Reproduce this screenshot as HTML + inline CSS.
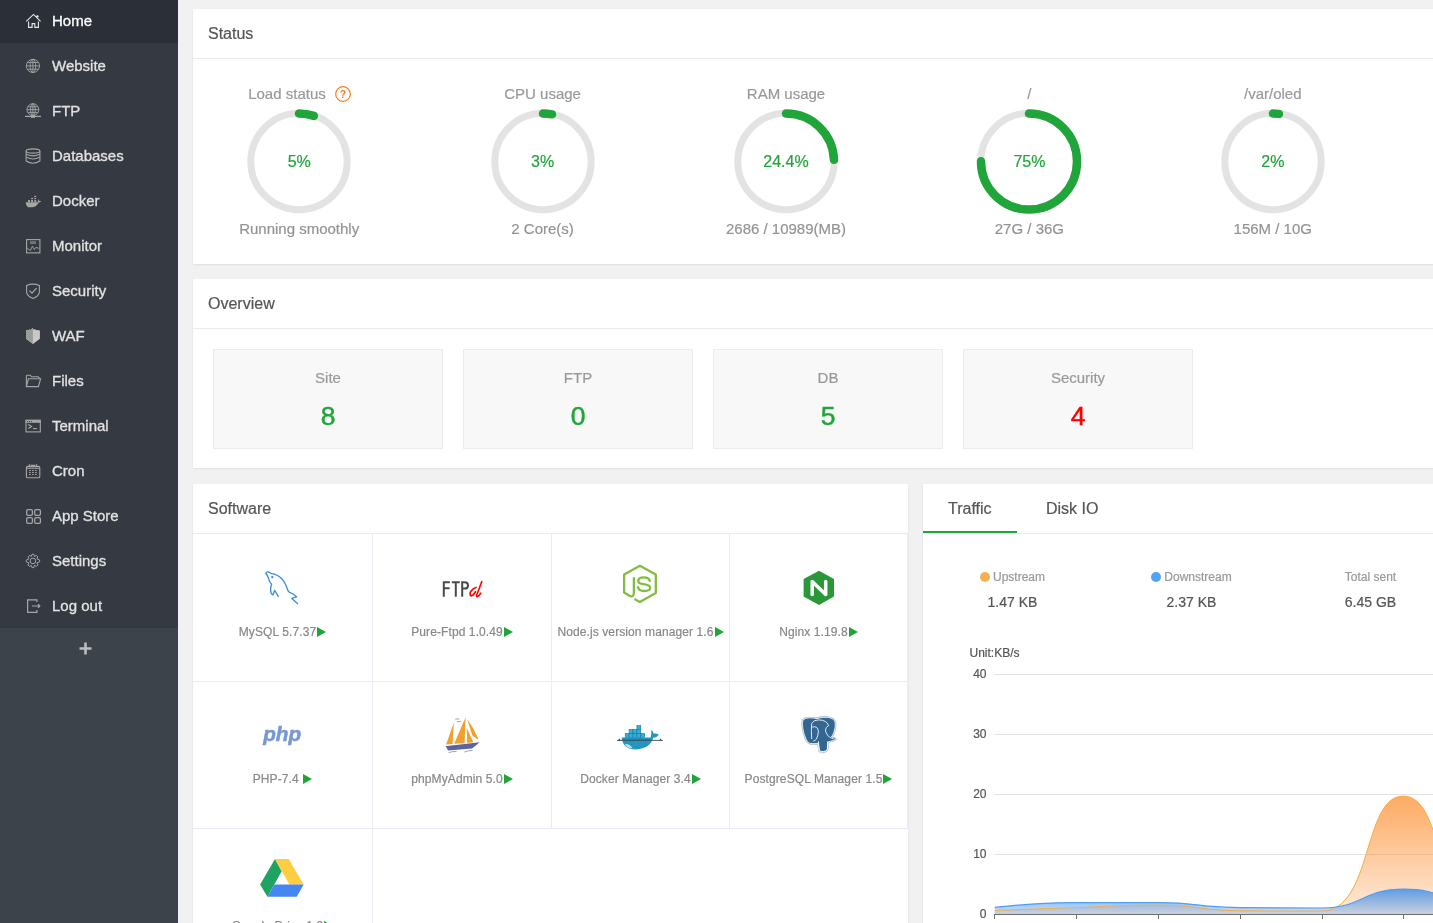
<!DOCTYPE html>
<html><head><meta charset="utf-8">
<style>
*{margin:0;padding:0;box-sizing:border-box}
html,body{width:1433px;height:923px;overflow:hidden}
body{background:#f1f1f1;font-family:"Liberation Sans",sans-serif;position:relative}
.abs{position:absolute}
#side{position:absolute;left:0;top:0;width:178px;height:923px;background:#3c434b}
#menu{position:absolute;left:0;top:0;width:178px;height:628px;background:#353a42}
.mi{position:absolute;left:0;width:178px;height:45px;color:#e2e2e2;font-size:15px;line-height:45px;-webkit-text-stroke:0.3px currentColor}
.mi span{position:absolute;left:52px;top:0}
.mi svg{position:absolute;left:20px;top:10px;width:28px;height:28px;color:#a6a6a6}
.mi.on svg{top:8px;color:#e8e8e8}
.mi.on{background:#2b2f37;color:#fff;height:43px;line-height:41px}
#plus{position:absolute;left:78px;top:641px;width:15px;height:15px}
.card{position:absolute;background:#fff;box-shadow:0 1px 2px rgba(0,0,0,0.08);-webkit-text-stroke:0.2px currentColor}
.ch{position:absolute;left:0;top:0;right:0;height:50px;border-bottom:1px solid #eaeaea}
.ct{position:absolute;left:15px;top:16px;font-size:16px;color:#555;line-height:18px}
.g{position:absolute;width:200px;height:250px;text-align:center;font-size:15px}
.gt{position:absolute;left:0;width:200px;top:76px;line-height:18px;color:#999}
.gb{position:absolute;left:0;width:200px;top:211px;line-height:18px;color:#939393}
.gv{position:absolute;left:0;width:200px;top:144px;line-height:18px;color:#20a53a;font-size:16px}

.ob{position:absolute;top:70px;width:230px;height:100px;background:#f8f8f8;border:1px solid #ececec;text-align:center}
.ol{position:absolute;left:0;right:0;top:19px;font-size:15px;color:#999;line-height:18px}
.on2{position:absolute;left:0;right:0;top:51px;font-size:26.5px;-webkit-text-stroke:0.5px currentColor;color:#20a53a;line-height:30px}
.sc{position:absolute;border-right:1px solid #ebebf8;border-bottom:1px solid #ebebf8}
.sn{position:absolute;left:0;right:0;top:91px;text-align:center;font-size:12px;color:#888;line-height:14px;white-space:nowrap;letter-spacing:0.1px}
.sn i{display:inline-block;width:0;height:0;border-top:5px solid transparent;border-bottom:5px solid transparent;border-left:9px solid #20a53a;vertical-align:-1px;margin-left:1px}
.si{position:absolute;left:0;right:0;top:30px;height:45px}
.si svg{position:absolute;left:50%;transform:translateX(-50%)}
.tab{position:absolute;top:16px;font-size:16px;line-height:18px;color:#555}
.st{position:absolute;top:86px;width:179px;text-align:center;font-size:12px;line-height:14px;color:#999}
.dot{display:inline-block;width:10px;height:10px;border-radius:50%;margin-right:3px;vertical-align:-0.5px}
.sv{position:absolute;top:110px;width:179px;text-align:center;font-size:14px;line-height:16px;color:#555}
.yl{position:absolute;left:0;width:63.5px;text-align:right;font-size:12px;line-height:14px;color:#555}
</style></head><body><div id="wrap" style="position:absolute;left:0;top:0;width:1433px;height:923px;overflow:hidden;will-change:transform">
<div id="side">
  <div id="menu">
    <div class="mi on" style="top:0"><svg viewBox="0 0 28 28" stroke="currentColor" stroke-width="1.1"><path d="M6.2 13.3 L13.5 6.4 L20.6 13.3" fill="none"/><path d="M8.6 13.6 V19.4 H12.1 V15.6 H14.8 V19.4 H18.4 V13.6" fill="none"/><circle cx="17.4" cy="8.4" r="1.2" fill="currentColor" stroke="none"/></svg><span>Home</span></div>
    <div class="mi" style="top:43px"><svg viewBox="0 0 28 28" stroke="currentColor" stroke-width="0.9"><circle cx="12.9" cy="12.9" r="6.6" fill="none"/><ellipse cx="12.9" cy="12.9" rx="2.8" ry="6.6" fill="none"/><path d="M12.9 6.3V19.5M6.3 12.9H19.5M7.4 9.6H18.4M7.4 16.2H18.4" fill="none"/></svg><span>Website</span></div>
    <div class="mi" style="top:88px"><svg viewBox="0 0 28 28" stroke="currentColor" stroke-width="0.9"><circle cx="12.9" cy="11.6" r="5.9" fill="none"/><ellipse cx="12.9" cy="11.6" rx="2.4" ry="5.9" fill="none"/><path d="M12.9 5.7V17.5M7 11.6H18.8M8 8.8H17.8M8 14.4H17.8" fill="none"/><path d="M5 18.4H21" fill="none" stroke-width="1.3"/><rect x="11" y="17.3" width="4" height="2.6" fill="currentColor" stroke="none"/></svg><span>FTP</span></div>
    <div class="mi" style="top:133px"><svg viewBox="0 0 28 28" stroke="currentColor" stroke-width="1.1"><ellipse cx="13" cy="8" rx="6.9" ry="2.1" fill="none"/><path d="M6.1 8V18 Q13 22.5 19.9 18 V8" fill="none"/><path d="M6.6 11.2 Q13 14.6 19.4 11.2M6.6 14.3 Q13 17.7 19.4 14.3" fill="none"/></svg><span>Databases</span></div>
    <div class="mi" style="top:178px"><svg viewBox="0 0 28 28" stroke="currentColor" stroke-width="1.1"><g fill="currentColor" stroke="none"><rect x="14.3" y="7.8" width="1.9" height="1.3"/><rect x="11.1" y="9.9" width="1.9" height="1.3"/><rect x="14.3" y="9.9" width="1.9" height="1.3"/><rect x="8" y="12" width="1.9" height="2"/><rect x="11.1" y="12" width="1.9" height="2"/><rect x="14.3" y="12" width="1.9" height="2"/><path d="M5.8 14.2 H17.6 C18 13 18.2 11.8 18.6 11 C19.1 12 19.2 12.6 19.3 13 C20 12.8 20.6 12.9 21.1 13.2 C20.6 14.1 19.4 14.4 18.6 14.4 C17.2 17.4 15 19.2 11.8 19.2 H8.3 C6.8 18.4 5.8 16.6 5.8 14.2Z"/></g></svg><span>Docker</span></div>
    <div class="mi" style="top:223px"><svg viewBox="0 0 28 28" stroke="currentColor" stroke-width="1.1"><rect x="6.6" y="6.6" width="13.3" height="13.3" fill="none"/><rect x="10" y="8.2" width="6" height="2.8" fill="currentColor" stroke="none" opacity="0.55"/><path d="M7.2 15 L10.4 17.6 L12.4 13.2 L14.4 16.6 L15.8 14.4 L18.9 15.3" fill="none" stroke-width="0.9"/></svg><span>Monitor</span></div>
    <div class="mi" style="top:268px"><svg viewBox="0 0 28 28" stroke="currentColor" stroke-width="1.1"><path d="M6.6 7.4 Q13 4.8 19.4 7.4 V14.3 Q18.6 18 13 20.6 Q7.4 18 6.6 14.3Z" fill="none"/><path d="M9.4 12.6 L12 15.1 L16.6 10.1" fill="none" stroke-width="1.3"/></svg><span>Security</span></div>
    <div class="mi" style="top:313px"><svg viewBox="0 0 28 28" stroke="currentColor" stroke-width="1.1"><path d="M6 7.4 L7.6 6.8 L8.4 7.5 L9.8 6.2 L10.8 7 L12.5 5.1 L13.6 6.4 L15.3 6.3 L16.2 7.3 L17.8 6.9 L19.9 7.5 V15.8 L13 20.9 L6 15.8Z" fill="#c9c9c9" stroke="none"/><path d="M6 7.4 L7.6 6.8 L8.4 7.5 L9.8 6.2 L10.8 7 L12.5 5.1 L12.9 5.6 V20.9 L6 15.8Z" fill="#9c9c9c" stroke="none"/></svg><span>WAF</span></div>
    <div class="mi" style="top:358px"><svg viewBox="0 0 28 28" stroke="currentColor" stroke-width="1.1"><path d="M6.4 18.6 V8.2 Q6.4 7.3 7.3 7.3 H10.3 L11.6 8.8 H18.2 L19.6 10.3" fill="none"/><path d="M6.4 18.6 L8.4 10.8 H20.6 L18.4 18.6Z" fill="none"/></svg><span>Files</span></div>
    <div class="mi" style="top:403px"><svg viewBox="0 0 28 28" stroke="currentColor" stroke-width="1.1"><rect x="6" y="7.3" width="14.3" height="11.6" fill="none"/><rect x="5.6" y="6.8" width="15.1" height="3" fill="currentColor" stroke="none"/><g fill="#353a42" stroke="none"><circle cx="7.5" cy="8.5" r="0.55"/><circle cx="9.5" cy="8.5" r="0.55"/><circle cx="11.5" cy="8.5" r="0.55"/></g><path d="M8.3 11.4 L11.6 13.5 L8.3 15.6" fill="none" stroke-width="1.2"/><path d="M12.9 15.6 H16.9" fill="none" stroke-width="1.1"/></svg><span>Terminal</span></div>
    <div class="mi" style="top:448px"><svg viewBox="0 0 28 28" stroke="currentColor" stroke-width="1.1"><rect x="6.4" y="8.4" width="13.4" height="11.4" rx="1.4" fill="none"/><path d="M6.6 10.2 H19.6" fill="none"/><path d="M9.4 6.2 V8.6 M16.5 6.2 V8.6 M10.8 7.4 H15.1" fill="none" stroke-width="1.2"/><g fill="currentColor" stroke="none"><rect x="9" y="12" width="1.8" height="0.9"/><rect x="12" y="12" width="1.8" height="0.9"/><rect x="15" y="12" width="1.8" height="0.9"/><rect x="9" y="14" width="1.8" height="0.9"/><rect x="12" y="14" width="1.8" height="0.9"/><rect x="15" y="14" width="1.8" height="0.9"/><rect x="9" y="16.1" width="1.8" height="0.9"/><rect x="12" y="16.1" width="1.8" height="0.9"/><rect x="15" y="16.1" width="1.8" height="0.9"/></g></svg><span>Cron</span></div>
    <div class="mi" style="top:493px"><svg viewBox="0 0 28 28" stroke="currentColor" stroke-width="1.1"><rect x="6.7" y="6.7" width="5.7" height="5.6" rx="1.3" fill="none" stroke-width="1.3"/><rect x="14.7" y="6.7" width="5.7" height="5.6" rx="1.3" fill="none" stroke-width="1.3"/><rect x="6.7" y="14.7" width="5.7" height="5.6" rx="1.3" fill="none" stroke-width="1.3"/><rect x="14.7" y="14.7" width="5.7" height="5.6" rx="1.3" fill="none" stroke-width="1.3"/></svg><span>App Store</span></div>
    <div class="mi" style="top:538px"><svg viewBox="0 0 28 28" stroke="currentColor" stroke-width="1.1"><path d="M12 6.3 H13.8 L14.4 8.4 L16.3 7.4 L17.8 8.9 L16.9 10.8 L19.6 12 V13.8 L16.9 14.9 L17.9 16.9 L16.4 18.4 L14.4 17.4 L13.8 19.6 H12 L11.3 17.4 L9.4 18.4 L7.9 16.9 L8.9 14.9 L6.3 13.8 V12 L8.9 10.8 L8 8.9 L9.5 7.4 L11.3 8.4Z" fill="none" stroke-width="1"/><circle cx="12.9" cy="12.9" r="2.8" fill="none" stroke-width="1"/></svg><span>Settings</span></div>
    <div class="mi" style="top:583px"><svg viewBox="0 0 28 28" stroke="currentColor" stroke-width="1.1"><path d="M16.9 9 V6.8 H7.6 V19.3 H16.9 V17" fill="none" stroke-width="1.2"/><path d="M12 13 H19.6 M18 11.2 L19.8 13 L18 14.8" fill="none" stroke-width="1.2"/></svg><span>Log out</span></div>
  </div>
  <svg id="plus" viewBox="0 0 15 15" width="15" height="15"><path d="M7.5 1.5V13.5M1.5 7.5H13.5" stroke="#bdbdbd" stroke-width="2.6"/></svg>
</div>

<!-- Status -->
<div class="card" style="left:193px;top:9px;width:1260px;height:255px">
  <div class="ch" style="height:50px"><div class="ct">Status</div></div>
<div class="g" style="left:6.2px;top:0">
  <div class="gt" style="text-align:left;left:49px">Load status</div><svg class="q" width="18" height="18" viewBox="0 0 18 18" style="position:absolute;left:134.4px;top:76px"><circle cx="9" cy="9" r="7.3" fill="none" stroke="#f3802a" stroke-width="1.2"/><text x="9" y="12.8" text-anchor="middle" font-size="10.5" font-weight="bold" fill="#f3802a" font-family="Liberation Sans">?</text></svg>
  <svg class="gs" width="200" height="120" viewBox="0 0 200 120" style="position:absolute;left:0;top:92px"><circle cx="100" cy="60.5" r="48.2" fill="none" stroke="#e3e3e3" stroke-width="7"/><circle cx="100" cy="60.5" r="48" fill="none" stroke="#20a53a" stroke-width="8.5" stroke-linecap="round" stroke-dasharray="15.08 400" transform="rotate(-90 100 60.5)"/></svg>
  <div class="gv">5%</div>
  <div class="gb">Running smoothly</div>
</div>
<div class="g" style="left:249.6px;top:0">
  <div class="gt">CPU usage</div>
  <svg class="gs" width="200" height="120" viewBox="0 0 200 120" style="position:absolute;left:0;top:92px"><circle cx="100" cy="60.5" r="48.2" fill="none" stroke="#e3e3e3" stroke-width="7"/><circle cx="100" cy="60.5" r="48" fill="none" stroke="#20a53a" stroke-width="8.5" stroke-linecap="round" stroke-dasharray="9.05 400" transform="rotate(-90 100 60.5)"/></svg>
  <div class="gv">3%</div>
  <div class="gb">2 Core(s)</div>
</div>
<div class="g" style="left:493.0px;top:0">
  <div class="gt">RAM usage</div>
  <svg class="gs" width="200" height="120" viewBox="0 0 200 120" style="position:absolute;left:0;top:92px"><circle cx="100" cy="60.5" r="48.2" fill="none" stroke="#e3e3e3" stroke-width="7"/><circle cx="100" cy="60.5" r="48" fill="none" stroke="#20a53a" stroke-width="8.5" stroke-linecap="round" stroke-dasharray="73.59 400" transform="rotate(-90 100 60.5)"/></svg>
  <div class="gv">24.4%</div>
  <div class="gb">2686 / 10989(MB)</div>
</div>
<div class="g" style="left:736.4px;top:0">
  <div class="gt">/</div>
  <svg class="gs" width="200" height="120" viewBox="0 0 200 120" style="position:absolute;left:0;top:92px"><circle cx="100" cy="60.5" r="48.2" fill="none" stroke="#e3e3e3" stroke-width="7"/><circle cx="100" cy="60.5" r="48" fill="none" stroke="#20a53a" stroke-width="8.5" stroke-linecap="round" stroke-dasharray="226.19 400" transform="rotate(-90 100 60.5)"/></svg>
  <div class="gv">75%</div>
  <div class="gb">27G / 36G</div>
</div>
<div class="g" style="left:979.8px;top:0">
  <div class="gt">/var/oled</div>
  <svg class="gs" width="200" height="120" viewBox="0 0 200 120" style="position:absolute;left:0;top:92px"><circle cx="100" cy="60.5" r="48.2" fill="none" stroke="#e3e3e3" stroke-width="7"/><circle cx="100" cy="60.5" r="48" fill="none" stroke="#20a53a" stroke-width="8.5" stroke-linecap="round" stroke-dasharray="6.03 400" transform="rotate(-90 100 60.5)"/></svg>
  <div class="gv">2%</div>
  <div class="gb">156M / 10G</div>
</div>
</div>

<!-- Overview -->
<div class="card" style="left:193px;top:279px;width:1260px;height:189px">
  <div class="ch"><div class="ct">Overview</div></div>
  <div class="ob" style="left:20px"><div class="ol">Site</div><div class="on2">8</div></div>
  <div class="ob" style="left:270px"><div class="ol">FTP</div><div class="on2">0</div></div>
  <div class="ob" style="left:520px"><div class="ol">DB</div><div class="on2">5</div></div>
  <div class="ob" style="left:770px"><div class="ol">Security</div><div class="on2" style="color:#f00">4</div></div>
</div>

<!-- Software -->
<div class="card" style="left:193px;top:484px;width:715px;height:460px;overflow:hidden">
  <div class="ch"><div class="ct">Software</div></div>
<div class="sc" style="left:0px;top:50px;width:180px;height:148px"></div>
<div class="sn" style="left:0px;width:179px;top:141px">MySQL 5.7.37<i></i></div>
<div class="sc" style="left:180px;top:50px;width:179px;height:148px"></div>
<div class="sn" style="left:180px;width:178px;top:141px">Pure-Ftpd 1.0.49<i></i></div>
<div class="sc" style="left:359px;top:50px;width:178px;height:148px"></div>
<div class="sn" style="left:359px;width:177px;top:141px">Node.js version manager 1.6<i></i></div>
<div class="sc" style="left:537px;top:50px;width:178px;height:148px"></div>
<div class="sn" style="left:537px;width:177px;top:141px">Nginx 1.19.8<i></i></div>
<div class="sc" style="left:0px;top:198px;width:180px;height:147px"></div>
<div class="sn" style="left:0px;width:179px;top:288px">PHP-7.4 <i></i></div>
<div class="sc" style="left:180px;top:198px;width:179px;height:147px"></div>
<div class="sn" style="left:180px;width:178px;top:288px">phpMyAdmin 5.0<i></i></div>
<div class="sc" style="left:359px;top:198px;width:178px;height:147px"></div>
<div class="sn" style="left:359px;width:177px;top:288px">Docker Manager 3.4<i></i></div>
<div class="sc" style="left:537px;top:198px;width:178px;height:147px"></div>
<div class="sn" style="left:537px;width:177px;top:288px">PostgreSQL Manager 1.5<i></i></div>
<div class="sc" style="left:0px;top:345px;width:180px;height:147px"></div>
<div class="sn" style="left:0px;width:179px;top:435px">Google Drive 1.0<i></i></div>
<svg class="abs" style="left:0;top:0" width="715" height="460" viewBox="193 484 715 460">
<!-- mysql -->
<g transform="translate(258 562)" fill="none" stroke="#3d8fd8" stroke-width="1.35" stroke-linejoin="round" stroke-linecap="round">
<path d="M20.3 34.3 L16.6 28.3 L15.1 32.8 Q12.6 31.8 12.6 28 Q12.5 24.6 13.6 22.4 Q11.2 19.4 10.2 15.6 Q9 12.6 7.9 11.3 Q8.2 9.6 10.2 9.9 Q12 10.4 13.6 11.7 Q19.4 12.4 23.8 16.8 Q27 20.2 28.6 25 Q29.8 29.2 31.2 30.2 Q35 31.6 38.6 34.8 L33.8 36.4 L39.5 41.6"/>
<circle cx="14.3" cy="15.1" r="0.5" fill="#3d8fd8"/>
</g>
<!-- ftpd -->
<g transform="translate(436 568)" fill="none" stroke="#4a4a4a" stroke-width="2">
<path d="M7.8 28.7 V14.2 H13.9 M7.8 20.3 H13.6"/>
<path d="M15.8 14.2 H23.8 M19.8 14.2 V28.7"/>
<path d="M26.2 28.7 V14.2 H28.6 Q32 14.2 32 17.4 Q32 20.6 28.6 20.6 H26.2"/>
<path d="M40 19.4 Q36.6 20.4 34.4 24 Q33.4 27.4 35.2 28 Q37.2 27.6 39.6 23.8 M45.8 13.6 L40.8 26.8 Q40.2 29 41.6 28.6 Q43.2 27.6 44.8 25.2" stroke="#f00" stroke-width="1.6" stroke-linecap="round" stroke-linejoin="round"/>
</g>
<!-- node -->
<g transform="translate(616 560)" fill="none" stroke="#80bd41" stroke-width="2.3" stroke-linejoin="round">
<path d="M18.4 39 L23.9 42 L39.8 33 V14.6 L23.9 5.7 L8.1 14.6 V32.6 L13.5 35.8 Q17.9 37.6 17.9 32.6 V17.2"/>
<path d="M33.8 20.8 Q32.6 17.4 28 17.4 Q22.2 17.4 22.2 21 Q22.2 23.6 27.6 24.2 Q34.2 25 34.2 27.8 Q34.2 31 28 31 Q23 31 22 27.2" stroke-linecap="round"/>
</g>
<!-- nginx -->
<g transform="translate(794 564)">
<path d="M25 6.8 L40 15.1 V32.5 L25 41.1 L9.6 32.5 V15.1Z" fill="#2a9739"/>
<path d="M18.2 30.6 V17.6 L31.7 30.4 V17.6" fill="none" stroke="#fff" stroke-width="3.5" stroke-linecap="round" stroke-linejoin="round"/>
</g>
<!-- php -->
<text x="263.2" y="741.2" font-family="Liberation Sans" font-weight="bold" font-style="italic" font-size="21" fill="#7797d1" stroke="#7797d1" stroke-width="0.5" textLength="38" lengthAdjust="spacingAndGlyphs" transform="translate(0 741.2) scale(1 0.95) translate(0 -741.2)">php</text>
<!-- phpmyadmin -->
<g transform="translate(436 712)">
<path d="M10.1 32.5 L17.9 10.4 L16.6 32Z M18.2 31.7 L29.6 5.2 L28.6 31.2Z M30.7 16.1 L31.2 30.9 L37.4 30.2Z M31.2 7.3 Q38 16 42.6 27.6 Q39 26 36.2 23.2Z" fill="#f0a12c"/>
<path d="M9.6 34.2 L43.6 30.2 Q40 33.4 36 36.4 L12.2 38.6Z" fill="#5d62a0"/>
<path d="M12.6 40.6 Q16 39.4 20.6 39.4 M28.4 40 Q32 38.6 36.6 38.4 M19.2 7 H23.4 M21 9.6 H25" stroke="#5d62a0" stroke-width="0.6" fill="none"/>
</g>
<!-- docker -->
<g transform="translate(612 712)">
<path d="M9.7 25.4 H38.6 Q39.6 22 39.2 17.8 Q41 18.8 41.6 21.6 Q44.6 21.2 46.8 22.7 Q45 25.6 41.2 25.8 Q38.6 36.4 24 37.4 Q11 37.6 9.7 25.4Z" fill="#2496c2"/>
<path d="M13 32 Q18 31.6 20.6 36.6 Q14 36 13 32Z" fill="#bfe0e8"/>
<g fill="#30b2dc" stroke="#1d6f8a" stroke-width="0.55">
<rect x="13.2" y="21.4" width="3.9" height="3.9"/><rect x="17.1" y="21.4" width="3.9" height="3.9"/><rect x="21" y="21.4" width="3.9" height="3.9"/><rect x="24.9" y="21.4" width="3.9" height="3.9"/><rect x="28.8" y="21.4" width="3.9" height="3.9"/>
<rect x="17.1" y="17.5" width="3.9" height="3.9"/><rect x="21" y="17.5" width="3.9" height="3.9"/><rect x="24.9" y="17.5" width="3.9" height="3.9"/>
<rect x="24.9" y="13.6" width="3.9" height="3.9"/>
</g>
<path d="M5 28.4 H50.8" stroke="#3b4a52" stroke-width="0.9"/>
<path d="M6 28.4 L7.4 26.4 L8.8 28.4 M47.2 28.4 L48.6 26.4 L50 28.4" fill="#3b4a52"/>
<path d="M9.7 28 Q13 26 15 28 Q19 26 23.6 28 Q28 26 31.6 28 Q35 26 39 28" fill="none" stroke="#1d6f8a" stroke-width="0.6"/>
</g>
<!-- postgres -->
<g transform="translate(794 710)">
<path id="pgo" d="M8.8 10.4 Q11 7.6 15.6 7.8 Q19.6 7.8 22.9 8.6 Q28 6.8 33.3 7.3 Q40 8.2 41.1 12 Q41.8 17 40 21.8 Q39 25 37.4 27 Q41 27.6 41.6 29.1 Q40 31 36.4 31.2 L33.8 32.2 Q33.8 37 33.3 39.5 Q31.6 42.4 29.1 42.1 Q26.4 42.2 25.5 41.1 Q24.6 37 24.4 33.3 Q19.6 34 15.6 33.3 Q13 31.6 12 29.1 Q9.4 23 8.8 18.2 Q8.2 13 8.8 10.4Z" fill="#336791" stroke="#a5bbd0" stroke-width="2.2"/>
<path d="M8.8 10.4 Q11 7.6 15.6 7.8 Q19.6 7.8 22.9 8.6 Q28 6.8 33.3 7.3 Q40 8.2 41.1 12 Q41.8 17 40 21.8 Q39 25 37.4 27 Q41 27.6 41.6 29.1 Q40 31 36.4 31.2 L33.8 32.2 Q33.8 37 33.3 39.5 Q31.6 42.4 29.1 42.1 Q26.4 42.2 25.5 41.1 Q24.6 37 24.4 33.3 Q19.6 34 15.6 33.3 Q13 31.6 12 29.1 Q9.4 23 8.8 18.2 Q8.2 13 8.8 10.4Z" fill="#336791" stroke="#fff" stroke-width="0.8"/>
<path d="M17.7 29.1 Q17 20 17.7 13.5 Q19.6 9.8 24.4 9.9 Q29 10 31.2 11.4 Q33.8 13 34.6 15.6 Q33 16.4 32.2 17.7 Q31.2 20 31.7 21.8 Q33.4 25.6 35.4 27 Q37.6 28.4 39.5 29.1 M18.2 17.2 Q20.4 16.2 22.4 17.2 Q24.6 19 24.4 21.8 Q24 26 22.4 29.1 Q21 30.8 19.2 31.2 M24.4 31.2 Q24.8 37 25.5 40.6 Q27 41.8 29.1 41.6 Q32.4 41.2 33.3 39.5 Q33.6 35 33.8 31.2" fill="none" stroke="#fff" stroke-width="0.85"/>
</g>
<!-- gdrive -->
<g transform="translate(256 852)">
<path d="M19 7 L25.7 19.3 L11.4 44.8 L4.1 32.5Z" fill="#1ea362"/>
<path d="M19 7 H32.8 L47.7 32.5 H33.4Z" fill="#ffcd40"/>
<path d="M18.4 32.5 H47.7 L40.7 44.8 H11.4Z" fill="#4586f3"/>
</g>
</svg>
</div>

<!-- Traffic -->
<div class="card" style="left:923px;top:484px;width:530px;height:460px">
  <div class="ch"></div>
  <div class="tab" style="left:25px">Traffic</div>
  <div class="tab" style="left:123px">Disk IO</div>
  <div class="abs" style="left:0;top:47px;width:94px;height:2px;background:#20a53a"></div>
  <div class="st" style="left:0"><span class="dot" style="background:#f6b04f"></span>Upstream</div>
  <div class="sv" style="left:0">1.47 KB</div>
  <div class="st" style="left:179px"><span class="dot" style="background:#52a2f5"></span>Downstream</div>
  <div class="sv" style="left:179px">2.37 KB</div>
  <div class="st" style="left:358px">Total sent</div>
  <div class="sv" style="left:358px">6.45 GB</div>
  <div class="st" style="left:537px">Total received</div>
  <div class="sv" style="left:537px">0 B</div>
  <div class="abs" style="left:46.5px;top:162px;font-size:12px;line-height:14px;color:#555">Unit:KB/s</div>
<div class="yl" style="top:182.8px">40</div><div class="yl" style="top:242.8px">30</div><div class="yl" style="top:302.8px">20</div><div class="yl" style="top:362.8px">10</div><div class="yl" style="top:422.8px">0</div><svg class="abs" style="left:0;top:0" width="530" height="460" viewBox="923 484 530 460">
<defs>
<linearGradient id="go" x1="0" y1="796" x2="0" y2="914" gradientUnits="userSpaceOnUse"><stop offset="0" stop-color="rgb(252,136,36)" stop-opacity="0.71"/><stop offset="1" stop-color="rgb(252,136,36)" stop-opacity="0.17"/></linearGradient>
<linearGradient id="gb" x1="0" y1="889" x2="0" y2="914" gradientUnits="userSpaceOnUse"><stop offset="0" stop-color="rgb(50,140,240)" stop-opacity="0.78"/><stop offset="1" stop-color="rgb(50,140,240)" stop-opacity="0.26"/></linearGradient>
<clipPath id="cp"><rect x="994.5" y="600" width="700" height="314"/></clipPath>
</defs>
<g stroke="#e2e2e2" stroke-width="1"><path d="M994 674.5H1453M994 734.5H1453M994 794.5H1453M994 854.5H1453"/></g>
<g clip-path="url(#cp)">
<path d="M994.50 910.52 C994.50 910.52 1035.38 908.93 1076.26 907.58 C1117.14 906.23 1117.18 905.12 1158.02 905.12 C1198.94 905.12 1198.85 910.40 1239.78 910.70 C1280.61 911.00 1291.53 911.00 1321.54 911.00 C1373.29 911.00 1362.17 796.10 1403.30 796.10 C1443.93 796.10 1433.54 905.83 1485.06 908.90 C1515.30 910.70 1566.82 910.70 1566.82 910.70 L1566.82 914.00 L994.50 914.00 Z" fill="url(#go)"/>
<path d="M994.50 907.40 C994.50 907.40 1035.34 902.60 1076.26 902.60 C1117.10 902.60 1117.18 902.60 1158.02 902.60 C1198.94 902.60 1198.86 907.40 1239.78 907.70 C1280.62 908.00 1281.19 908.00 1321.54 908.00 C1362.95 908.00 1362.28 889.10 1403.30 889.10 C1444.04 889.10 1443.79 903.47 1485.06 905.30 C1525.55 907.10 1566.82 907.10 1566.82 907.10 L1566.82 914.00 L994.50 914.00 Z" fill="url(#gb)"/>
<path d="M994.50 910.52 C994.50 910.52 1035.38 908.93 1076.26 907.58 C1117.14 906.23 1117.18 905.12 1158.02 905.12 C1198.94 905.12 1198.85 910.40 1239.78 910.70 C1280.61 911.00 1291.53 911.00 1321.54 911.00 C1373.29 911.00 1362.17 796.10 1403.30 796.10 C1443.93 796.10 1433.54 905.83 1485.06 908.90 C1515.30 910.70 1566.82 910.70 1566.82 910.70" fill="none" stroke="#f6ac45" stroke-width="1"/>
<path d="M994.50 907.40 C994.50 907.40 1035.34 902.60 1076.26 902.60 C1117.10 902.60 1117.18 902.60 1158.02 902.60 C1198.94 902.60 1198.86 907.40 1239.78 907.70 C1280.62 908.00 1281.19 908.00 1321.54 908.00 C1362.95 908.00 1362.28 889.10 1403.30 889.10 C1444.04 889.10 1443.79 903.47 1485.06 905.30 C1525.55 907.10 1566.82 907.10 1566.82 907.10" fill="none" stroke="#4b9ef3" stroke-width="1.2"/>
</g>
<path d="M994 914.5H1453" stroke="#6e6e6e" stroke-width="1"/>
<path d="M994.5 914V919M1076.5 914V919M1158.5 914V919M1240.5 914V919M1322.5 914V919M1403.5 914V919" stroke="#6e6e6e" stroke-width="1"/>
</svg>
</div>
</div></body></html>
